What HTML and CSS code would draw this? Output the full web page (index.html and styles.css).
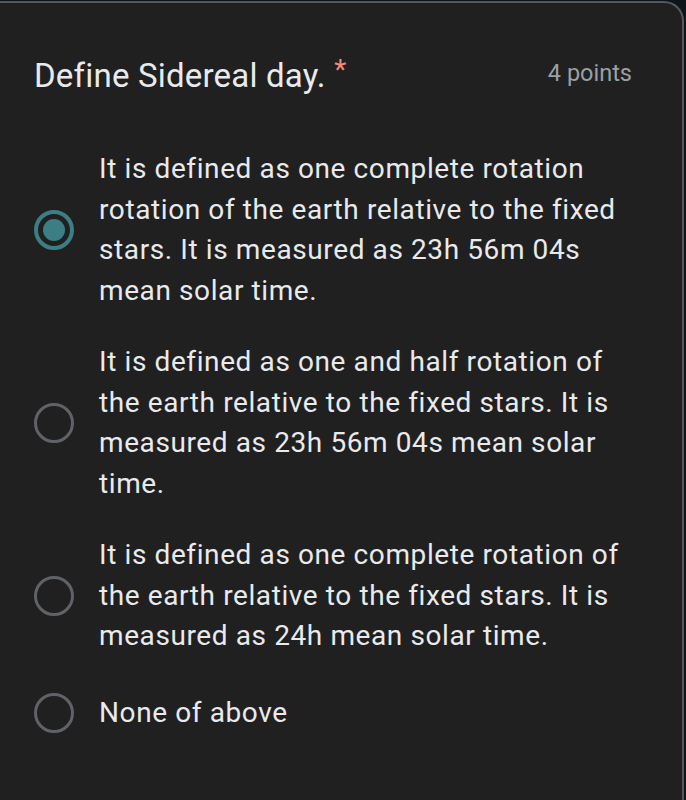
FILE: index.html
```html
<!DOCTYPE html>
<html lang="en">
<head>
    <meta charset="UTF-8">
    <meta name="viewport" content="width=device-width, initial-scale=1.0">
    <title>Define Sidereal day</title>
    <link rel="stylesheet" href="styles.css">
</head>
<body>
    <div class="card">
        <div class="question">
            <h2 class="title">Define Sidereal day. <span class="required">*</span></h2>
            <span class="points">4 points</span>
        </div>

        <div class="options">
            <label class="option">
                <span class="radio checked"></span>
                <span class="option-text">It is defined as one complete rotation rotation of the earth relative to the fixed stars. It is measured as 23h 56m 04s mean solar time.</span>
            </label>
            <label class="option">
                <span class="radio"></span>
                <span class="option-text">It is defined as one and half rotation of the earth relative to the fixed stars. It is measured as 23h 56m 04s mean solar time.</span>
            </label>
            <label class="option">
                <span class="radio"></span>
                <span class="option-text">It is defined as one complete rotation of the earth relative to the fixed stars. It is measured as 24h mean solar time.</span>
            </label>
            <label class="option last">
                <span class="radio"></span>
                <span class="option-text">None of above</span>
            </label>
        </div>
    </div>
</body>
</html>
```

FILE: styles.css
```css
:root {
    --card-bg: #202020;
    --outer-bg: #0d1519;
    --border-color: #55595d;
    --text-color: #e8eaed;
    --muted-color: #9aa0a6;
    --accent: #3b7e84;
}

* {
    box-sizing: border-box;
    margin: 0;
    padding: 0;
}

body {
    font-family: Roboto, "Noto Sans", sans-serif;
    background-color: var(--outer-bg);
    color: var(--text-color);
    padding-top: 1px;
    height: 800px;
    overflow: hidden;
}

.card {
    width: 684px;
    min-height: 820px;
    background: var(--card-bg);
    border-top: 2px solid var(--border-color);
    border-right: 2px solid var(--border-color);
    border-top-right-radius: 20px;
    padding: 47px 0 0 34px;
}

.question {
    display: flex;
    justify-content: space-between;
    align-items: center;
    padding-right: 50px;
}

.title {
    font-size: 33px;
    font-weight: 400;
    letter-spacing: 0.2px;
    line-height: 40px;
}

.required {
    color: #f28b82;
    font-size: 28px;
    vertical-align: 8px;
}

.points {
    font-size: 23.5px;
    color: var(--muted-color);
}

.options {
    margin-top: 53px;
    display: flex;
    flex-direction: column;
    gap: 31px;
}

.option {
    display: flex;
    align-items: center;
    gap: 25px;
}

.option.last {
    margin-top: 5px;
}

.radio {
    flex: none;
    width: 40px;
    height: 40px;
    border: 3px solid #5f6266;
    border-radius: 50%;
    position: relative;
}

.radio.checked {
    border: 4px solid var(--accent);
}

.radio.checked::after {
    content: "";
    position: absolute;
    top: 5px;
    left: 5px;
    width: 22px;
    height: 22px;
    border-radius: 50%;
    background: var(--accent);
}

.option-text {
    width: 530px;
    font-size: 28px;
    letter-spacing: 0.6px;
    line-height: 40.5px;
}
```
